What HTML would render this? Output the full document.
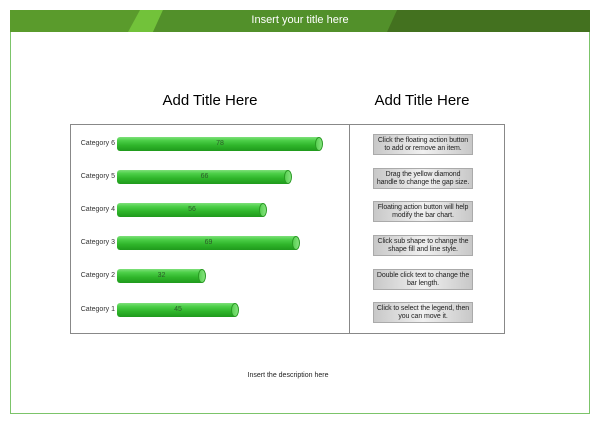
<!DOCTYPE html>
<html><head><style>
body{margin:0;width:600px;height:424px;background:#fff;font-family:"Liberation Sans",sans-serif;position:relative;overflow:hidden}
.a{position:absolute}
.frame{left:10px;top:10px;width:578px;height:402px;border:1px solid #7cc46a}
.hdr{left:10px;top:10px;width:580px;height:22px;background:#5a9e2c;overflow:hidden}
.t{font-size:15px;color:#000}
.box{left:70px;top:124px;width:433px;height:208px;border:1px solid #888}
.lbl{font-size:7px;color:#333;width:45px;text-align:right;left:70px}
.bar{height:14px;border-radius:3px 0 0 3px;background:linear-gradient(#7ee07a 0%,#4ccf48 25%,#2fb52a 60%,#1f9a1c 100%);left:117px}
.cap{width:8px;height:14px;border-radius:50%;background:linear-gradient(90deg,#58d052,#86e37e);border:1px solid #2a9a24;box-sizing:border-box}
.num{font-size:7px;color:#2d5a2a;text-align:center}
.btn{left:373px;width:100px;height:21px;box-sizing:border-box;border:1px solid #aaa;background:linear-gradient(90deg,#c8c8c8,#f0f0f0 50%,#c8c8c8);font-size:7px;color:#222;text-align:center;line-height:8.5px;padding-top:1.5px;white-space:nowrap;letter-spacing:-0.1px}
</style></head><body>
<div class="a frame"></div>
<div class="a hdr">
<svg width="580" height="22" class="a" style="left:0;top:0">
<rect width="580" height="22" fill="#5a9b2c"/>
<polygon points="130,0 153,0 143,22 118,22" fill="#72c23a"/>
<polygon points="153,0 387,0 377,22 143,22" fill="#52902a"/>
<polygon points="387,0 580,0 580,22 377,22" fill="#43711f"/>
</svg>
<div class="a" style="left:0;width:580px;top:4px;text-align:center;color:#fff;font-size:11px">Insert your title here</div>
</div>
<div class="a t" style="left:130px;width:160px;text-align:center;top:92px">Add Title Here</div>
<div class="a t" style="left:342px;width:160px;text-align:center;top:92px">Add Title Here</div>
<div class="a box"></div>
<div class="a" style="left:349px;top:124px;width:1px;height:209px;background:#888"></div>

<div class="a lbl" style="top:140px">Category 6</div>
<div class="a bar" style="top:137px;width:202px"></div><div class="a cap" style="left:315px;top:137px"></div><div class="a num" style="left:117px;width:206px;top:140px">78</div>
<div class="a lbl" style="top:173px">Category 5</div>
<div class="a bar" style="top:170px;width:171px"></div><div class="a cap" style="left:284px;top:170px"></div><div class="a num" style="left:117px;width:175px;top:173px">66</div>
<div class="a lbl" style="top:206px">Category 4</div>
<div class="a bar" style="top:203px;width:146px"></div><div class="a cap" style="left:259px;top:203px"></div><div class="a num" style="left:117px;width:150px;top:206px">56</div>
<div class="a lbl" style="top:239px">Category 3</div>
<div class="a bar" style="top:236px;width:179px"></div><div class="a cap" style="left:292px;top:236px"></div><div class="a num" style="left:117px;width:183px;top:239px">69</div>
<div class="a lbl" style="top:272px">Category 2</div>
<div class="a bar" style="top:269px;width:85px"></div><div class="a cap" style="left:198px;top:269px"></div><div class="a num" style="left:117px;width:89px;top:272px">32</div>
<div class="a lbl" style="top:306px">Category 1</div>
<div class="a bar" style="top:303px;width:118px"></div><div class="a cap" style="left:231px;top:303px"></div><div class="a num" style="left:117px;width:122px;top:306px">45</div>

<div class="a btn" style="top:134px">Click the floating action button<br>to add or remove an item.</div>
<div class="a btn" style="top:168px">Drag the yellow diamond<br>handle to change the gap size.</div>
<div class="a btn" style="top:201px">Floating action button will help<br>modify the bar chart.</div>
<div class="a btn" style="top:235px">Click sub shape to change the<br>shape fill and line style.</div>
<div class="a btn" style="top:269px">Double click text to change the<br>bar length.</div>
<div class="a btn" style="top:302px">Click to select the legend, then<br>you can move it.</div>

<div class="a" style="left:188px;width:200px;text-align:center;top:372px;font-size:7px;color:#222">Insert the description here</div>
</body></html>
